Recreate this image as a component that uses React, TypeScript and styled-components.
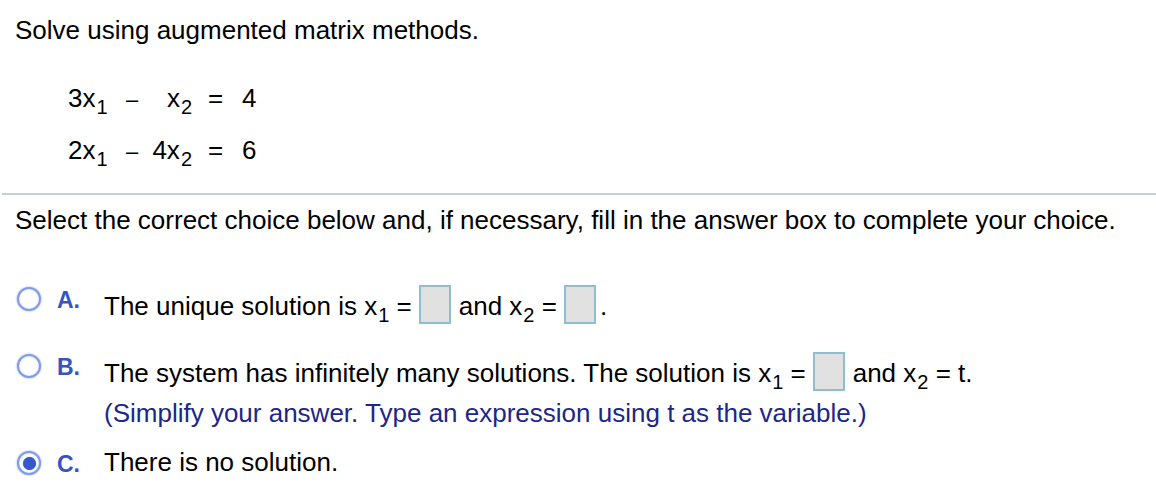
import React from "react";
import styled, { createGlobalStyle } from "styled-components";

const Global = createGlobalStyle`
  html, body { margin: 0; padding: 0; background: #fff; }
  body {
    font-family: "Liberation Sans", Arial, Helvetica, sans-serif;
    color: #000;
    -webkit-font-smoothing: antialiased;
  }
`;

const Page = styled.div`
  width: 1156px;
  height: 492px;
  overflow: hidden;
  padding: 0 0 0 2px;
  box-sizing: border-box;
`;

const Section = styled.div`
  padding-left: 13px;
`;

const Title = styled.div`
  font-size: 26px;
  line-height: 30px;
  padding-top: 15px;
`;

const EqGrid = styled.div`
  display: grid;
  grid-template-columns: 56px 16px 52px 50px auto;
  grid-auto-rows: 30px;
  row-gap: 22px;
  align-items: baseline;
  margin: 38px 0 0 53px;
  font-size: 26px;
  line-height: 30px;
`;

const Cell = styled.div<{ $align?: string; $pl?: number }>`
  text-align: ${(p) => p.$align || "left"};
  padding-left: ${(p) => p.$pl || 0}px;
  white-space: nowrap;
`;

const OpCell = styled.div`
  text-align: center;
  font-size: 22px;
  white-space: nowrap;
`;

const Sub = styled.sub`
  font-size: 20px;
  vertical-align: -7px;
  line-height: 0;
  padding-left: 1px;
`;

const Divider = styled.hr`
  border: none;
  height: 2px;
  background: #c9ceda;
  margin: 28px 0 0 0;
`;

const Instruction = styled.div`
  font-size: 26px;
  line-height: 30px;
  margin-top: 10px;
`;

const Options = styled.div`
  display: flex;
  flex-direction: column;
  margin-top: 48px;
`;

const Option = styled.div<{ $mt?: number }>`
  display: grid;
  grid-template-columns: 40px 47px 1fr;
  align-items: start;
  padding-left: 2px;
  margin-top: ${(p) => p.$mt || 0}px;
`;

const Radio = styled.span<{ $checked?: boolean }>`
  width: 20px;
  height: 20px;
  margin-top: 4px;
  border-radius: 50%;
  border: 2.5px solid #829ce6;
  box-shadow: 0 0 1.5px 0.5px rgba(124, 150, 232, 0.55), inset 0 0 1.5px rgba(124, 150, 232, 0.55);
  background: #fff;
  display: flex;
  align-items: center;
  justify-content: center;
  &::after {
    content: "";
    display: ${(p) => (p.$checked ? "block" : "none")};
    width: 13px;
    height: 13px;
    border-radius: 50%;
    background: #3557cc;
    box-shadow: 0 0 1px rgba(53, 87, 204, 0.8);
  }
`;

const Letter = styled.span`
  font-size: 23px;
  font-weight: bold;
  color: #3653c6;
  line-height: 30px;
  margin-top: 2px;
`;

const Body = styled.div`
  font-size: 26px;
  line-height: 30px;
`;

const Note = styled.div`
  color: #1c2787;
  margin-top: 10px;
`;

const Box = styled.span<{ $mr?: number }>`
  display: inline-block;
  width: 28px;
  height: 35px;
  background: #e1e1e1;
  border: 2px solid #8dbfd1;
  vertical-align: -5px;
  margin: 2px ${(p) => p.$mr ?? 8}px -4px 7px;
`;

const Eq = ({ a, b, rhs }: { a: React.ReactNode; b: React.ReactNode; rhs: string }) => (
  <>
    <Cell>{a}</Cell>
    <OpCell>–</OpCell>
    <Cell $align="right">{b}</Cell>
    <Cell $pl={16}>=</Cell>
    <Cell>{rhs}</Cell>
  </>
);

export default function App() {
  return (
    <Page>
      <Global />
      <Section>
        <Title>Solve using augmented matrix methods.</Title>
        <EqGrid>
          <Eq a={<>3x<Sub>1</Sub></>} b={<>x<Sub>2</Sub></>} rhs="4" />
          <Eq a={<>2x<Sub>1</Sub></>} b={<>4x<Sub>2</Sub></>} rhs="6" />
        </EqGrid>
      </Section>
      <Divider />
      <Section>
        <Instruction>
          Select the correct choice below and, if necessary, fill in the answer box to complete your choice.
        </Instruction>
        <Options>
          <Option>
            <Radio />
            <Letter>A.</Letter>
            <Body>
              The unique solution is x<Sub>1</Sub> =<Box />and x<Sub>2</Sub> =<Box $mr={4} />.
            </Body>
          </Option>
          <Option $mt={29}>
            <Radio />
            <Letter>B.</Letter>
            <Body>
              The system has infinitely many solutions. The solution is x<Sub>1</Sub> =<Box />and x
              <Sub>2</Sub> = t.
              <Note>(Simplify your answer. Type an expression using t as the variable.)</Note>
            </Body>
          </Option>
          <Option $mt={19}>
            <Radio $checked />
            <Letter>C.</Letter>
            <Body>There is no solution.</Body>
          </Option>
        </Options>
      </Section>
    </Page>
  );
}
